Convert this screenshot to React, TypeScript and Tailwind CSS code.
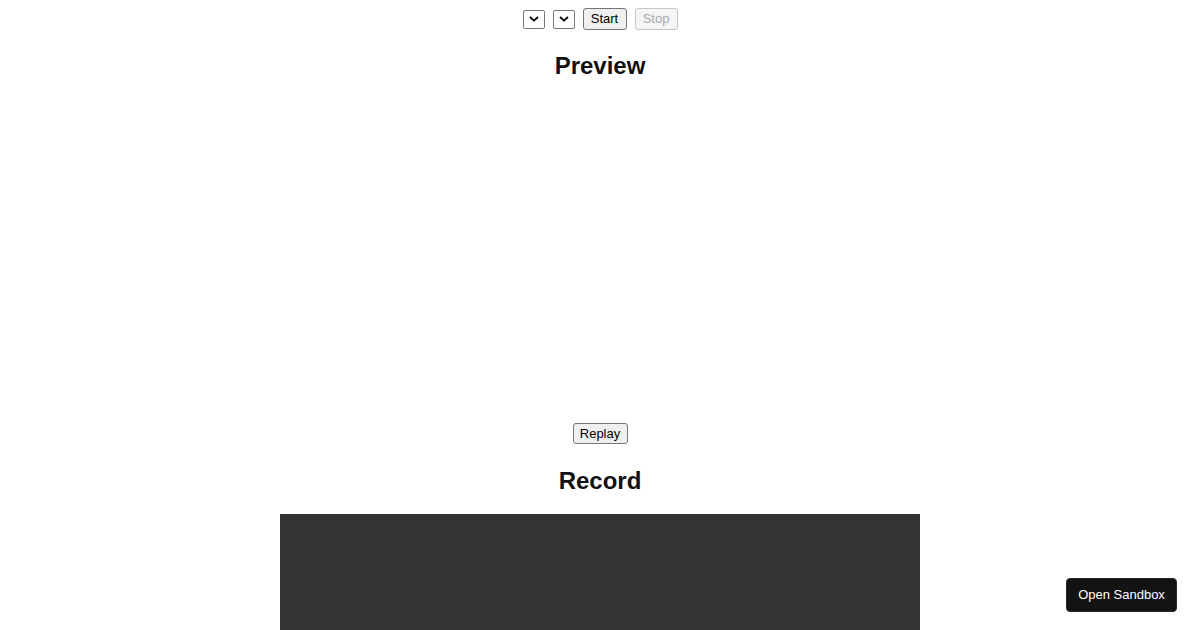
import React from "react";

function Sel() {
  return (
    <div className="w-[22px] h-[19px] border border-[#767676] rounded-[2px] bg-white flex items-center justify-center">
      <svg width="10" height="6" viewBox="0 0 10 6">
        <path d="M1 1 L5 4.6 L9 1" stroke="#000" strokeWidth="1.8" fill="none" />
      </svg>
    </div>
  );
}

export default function App() {
  return (
    <div className="bg-white h-[630px] relative overflow-hidden" style={{ fontFamily: '"Liberation Sans", Arial, sans-serif' }}>
      <div className="flex justify-center items-center gap-2 pt-[8px] h-[30px]">
        <Sel />
        <Sel />
        <div className="w-[44px] h-[22px] border border-[#767676] rounded-[3px] bg-[#efefef] text-[13px] text-black flex items-center justify-center">Start</div>
        <div className="w-[43px] h-[22px] border border-[#c6c6c6] rounded-[3px] bg-[#f5f5f5] text-[13px] text-[#a9a9a9] flex items-center justify-center">Stop</div>
      </div>
      <h2 className="mt-[22px] text-[24px] leading-[28px] font-bold text-center text-[#111]">Preview</h2>
      <div className="h-[343px]" />
      <div className="flex justify-center">
        <div className="w-[55px] h-[21px] border border-[#767676] rounded-[3px] bg-[#efefef] text-[13px] text-black flex items-center justify-center">Replay</div>
      </div>
      <h2 className="mt-[23px] text-[24px] leading-[28px] font-bold text-center text-[#111]">Record</h2>
      <div className="mt-[19px] mx-auto w-[640px] h-[200px] bg-[#333333]" />
      <div className="fixed right-[23px] bottom-[18px] w-[111px] h-[34px] rounded-[4px] bg-[#131313] border border-[#2a2a2a] text-white text-[13px] flex items-center justify-center">
        Open Sandbox
      </div>
    </div>
  );
}
